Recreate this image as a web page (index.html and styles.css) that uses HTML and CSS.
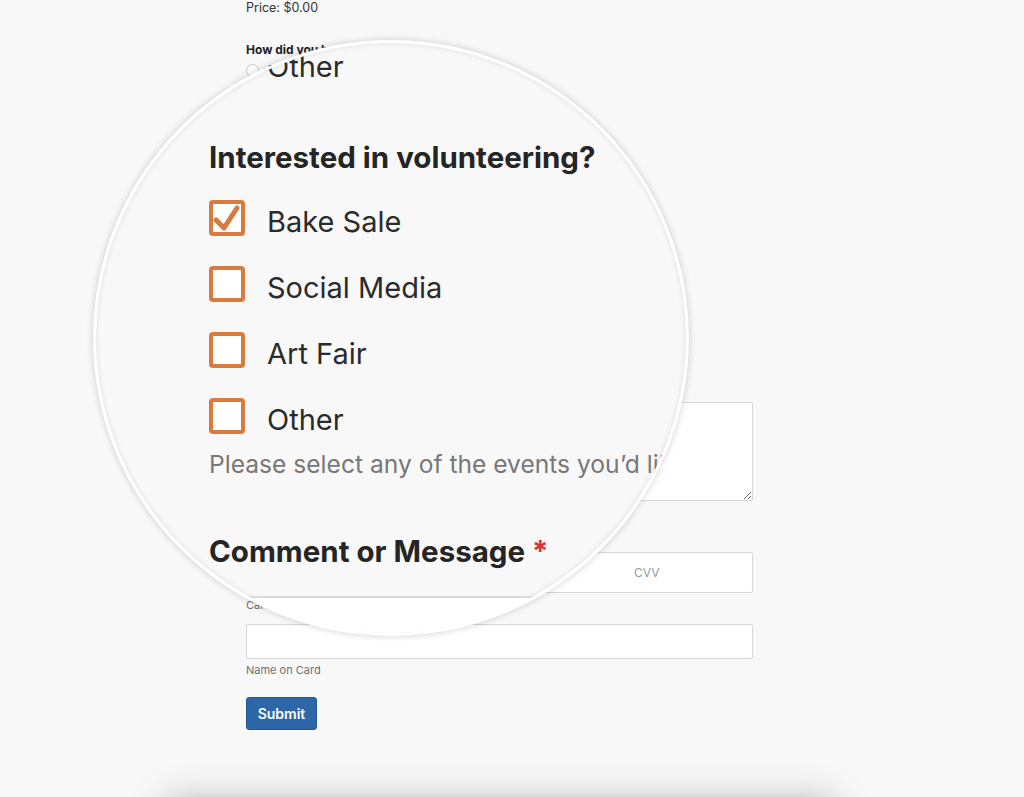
FILE: index.html
```html
<!DOCTYPE html>
<html lang="en">
<head>
<meta charset="utf-8">
<title>Volunteer form</title>
<link rel="stylesheet" href="styles.css">
</head>
<body>
<div class="page">
  <form class="form">
    <p class="price">Price: $0.00</p>

    <div class="field f-hear">
      <div class="label-b">How did you hear about us?</div>
      <div class="opts">
        <label class="opt"><span class="radio"></span>Search Engine</label>
        <label class="opt"><span class="radio"></span>Social Media</label>
        <label class="opt"><span class="radio"></span>Friend</label>
        <label class="opt"><span class="radio"></span>Other</label>
      </div>
    </div>

    <div class="field f-vol">
      <div class="label-b">Interested in volunteering?</div>
      <div class="opts">
        <label class="opt"><span class="cbox"></span>Bake Sale</label>
        <label class="opt"><span class="cbox"></span>Social Media</label>
        <label class="opt"><span class="cbox"></span>Art Fair</label>
        <label class="opt"><span class="cbox"></span>Other</label>
      </div>
      <div class="sub">Please select any of the events you’d like to help with.</div>
    </div>

    <div class="field f-comment">
      <div class="label-b">Comment or Message <span class="req">*</span></div>
      <textarea class="ta"></textarea>
    </div>

    <div class="field f-pay">
      <div class="pay-row">
        <div class="pay-col">
          <div class="input"></div>
          <div class="sub">Card Number</div>
        </div>
        <div class="pay-cvv">
          <div class="input cvv">CVV</div>
        </div>
      </div>
    </div>

    <div class="field f-name">
      <div class="input name-input"></div>
      <div class="sub">Name on Card</div>
    </div>

    <button type="button" class="submit">Submit</button>
  </form>

  <div class="lens">
    <div class="lens-inner">
      <div class="l-opt"><span class="l-radio"></span><span class="l-text">Other</span></div>
      <div class="l-heading">Interested in volunteering?</div>
      <div class="l-list">
        <div class="l-opt">
          <span class="l-box">
            <svg class="check" viewBox="0 0 36 36" width="36" height="36"><polyline points="7,20 15,28 28,8" fill="none" stroke="#d77b3f" stroke-width="5" stroke-linecap="round" stroke-linejoin="round"/></svg>
          </span>
          <span class="l-text">Bake Sale</span>
        </div>
        <div class="l-opt"><span class="l-box"></span><span class="l-text">Social Media</span></div>
        <div class="l-opt"><span class="l-box"></span><span class="l-text">Art Fair</span></div>
        <div class="l-opt"><span class="l-box"></span><span class="l-text">Other</span></div>
      </div>
      <div class="l-desc">Please select any of the events you’d like to help with.</div>
      <div class="l-heading l-big">Comment or Message <span class="req">*</span></div>
      <div class="l-textarea"></div>
    </div>
  </div>
</div>
<div class="next-card"></div>
</body>
</html>
```

FILE: styles.css
```css
html, body {
  margin: 0;
  height: 797px;
  overflow: hidden;
}
body {
  background: #f8f8f8;
  font-family: Inter, "Noto Sans", sans-serif;
  color: #333;
}
.page {
  position: relative;
}
.form {
  margin: 0 0 0 246px;
  width: 507px;
}
.price {
  margin: 0;
  font-size: 12.5px;
  line-height: 16px;
  color: #333;
}
.field {
  margin-top: 26px;
}
.label-b {
  font-size: 12px;
  font-weight: 700;
  line-height: 16px;
  color: #222;
}
.opts {
  display: flex;
  flex-direction: column;
}
.opt {
  display: flex;
  align-items: center;
  gap: 8px;
  font-size: 12px;
  line-height: 24px;
  color: #333;
}
.radio {
  width: 11px;
  height: 11px;
  border: 1px solid #c4c4c4;
  border-radius: 50%;
  background: #fff;
}
.cbox {
  width: 11px;
  height: 11px;
  border: 2px solid #d77b3f;
  border-radius: 2px;
  background: #fff;
}
.f-vol {
  margin-top: 24px;
}
.sub {
  font-size: 11px;
  line-height: 14px;
  color: #6f6f6f;
  margin-top: 5px;
}
.f-comment {
  margin-top: 73px;
}
.f-comment .label-b {
  margin-bottom: 4px;
}
.req {
  color: #d63638;
}
.ta {
  display: block;
  box-sizing: border-box;
  width: 507px;
  height: 99px;
  margin: 0;
  border: 1px solid #d6d6d6;
  border-radius: 2px;
  background: #fff;
  resize: vertical;
}
.f-pay {
  margin-top: 51px;
}
.pay-row {
  display: flex;
  gap: 9px;
}
.pay-col {
  flex: 1;
}
.pay-cvv {
  width: 249px;
}
.input {
  box-sizing: border-box;
  height: 41px;
  background: #fff;
  border: 1px solid #d6d6d6;
  border-radius: 2px;
}
.cvv {
  font-size: 12px;
  line-height: 39px;
  color: #9a9a9a;
  padding-left: 129px;
}
.f-name {
  margin-top: 12px;
}
.name-input {
  height: 35px;
}
.f-name .sub {
  margin-top: 4px;
}
.submit {
  display: block;
  margin-top: 20px;
  width: 71px;
  height: 33px;
  padding: 0;
  border: 1px solid #245b97;
  border-radius: 3px;
  background: #2d67a9;
  color: #fff;
  font-family: Inter, "Noto Sans", sans-serif;
  font-size: 14px;
  font-weight: 600;
}

/* magnifier lens */
.lens {
  position: absolute;
  left: 93px;
  top: 40px;
  width: 596px;
  height: 596px;
  box-sizing: border-box;
  border-radius: 50%;
  border: 3px solid #fff;
  background: #f8f8f8;
  overflow: hidden;
  box-shadow: 0 0 6px 1px rgba(0, 0, 0, 0.14), inset 0 0 5px 1px rgba(0, 0, 0, 0.08);
}
.lens-inner {
  padding: 2px 0 0 113px;
}
.l-opt {
  display: flex;
  align-items: flex-start;
  gap: 22px;
  height: 44px;
}
.l-box {
  position: relative;
  flex: none;
  width: 36px;
  height: 36px;
  box-sizing: border-box;
  border: 4px solid #d77b3f;
  border-radius: 4px;
  background: #fff;
}
.l-radio {
  flex: none;
  width: 36px;
  height: 36px;
  box-sizing: border-box;
  border: 3px solid #8a8a8a;
  border-radius: 50%;
  background: #fff;
}
.check {
  position: absolute;
  left: -4px;
  top: -4px;
}
.l-text {
  font-size: 29px;
  line-height: 44px;
  color: #2b2b2b;
  white-space: nowrap;
}
.l-heading {
  margin-top: 50px;
  font-size: 29.5px;
  font-weight: 700;
  line-height: 36px;
  color: #252525;
  white-space: nowrap;
}
.l-list {
  margin-top: 25px;
  display: flex;
  flex-direction: column;
  gap: 22px;
}
.l-desc {
  margin-top: 7px;
  font-size: 24.6px;
  line-height: 30px;
  color: #777;
  white-space: nowrap;
}
.l-big {
  margin-top: 54px;
}
.l-textarea {
  margin-top: 27px;
  width: 600px;
  height: 200px;
  background: #fff;
  border: 2px solid #d9d9d9;
}

.next-card {
  margin: 71px 0 0 165px;
  width: 670px;
  height: 60px;
  background: #f8f8f8;
  box-shadow: 0 0 36px rgba(0, 0, 0, 0.28);
}
```
